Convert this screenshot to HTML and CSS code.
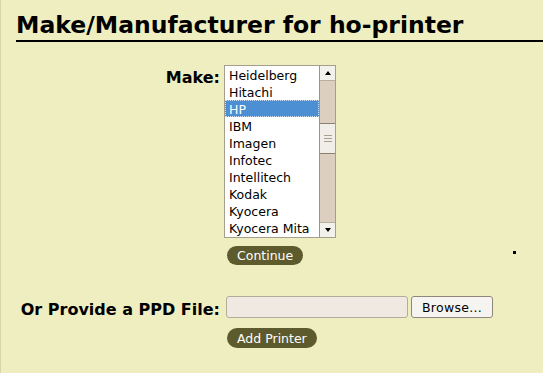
FILE: index.html
```html
<!DOCTYPE html>
<html>
<head>
<meta charset="utf-8">
<title>Make/Manufacturer for ho-printer</title>
<link rel="stylesheet" href="styles.css">
</head>
<body>
<h2 class="title">Make/Manufacturer for ho-printer</h2>
<form class="form">
  <div class="row row-make">
    <div class="label label-make">Make:</div>
    <div class="listbox">
      <div class="options">
        <div class="opt">Heidelberg</div>
        <div class="opt">Hitachi</div>
        <div class="opt sel">HP</div>
        <div class="opt">IBM</div>
        <div class="opt">Imagen</div>
        <div class="opt">Infotec</div>
        <div class="opt">Intellitech</div>
        <div class="opt">Kodak</div>
        <div class="opt">Kyocera</div>
        <div class="opt">Kyocera Mita</div>
      </div>
      <div class="sbar">
        <div class="sbtn"><span class="arr-up"></span></div>
        <div class="track">
          <div class="track-top"></div>
          <div class="thumb"><span class="grip"></span><span class="grip"></span><span class="grip"></span></div>
          <div class="track-bot"></div>
        </div>
        <div class="sbtn"><span class="arr-down"></span></div>
      </div>
    </div>
  </div>
  <div class="row row-continue">
    <div></div>
    <div class="ctrl-line">
      <button type="button" class="pill">Continue</button>
      <span class="dot"></span>
    </div>
  </div>
  <div class="row row-file">
    <div class="label label-file">Or Provide a PPD File:</div>
    <div class="file">
      <input class="file-field" type="text" readonly>
      <button type="button" class="browse">Browse...</button>
    </div>
  </div>
  <div class="row row-add">
    <div></div>
    <div class="ctrl-line">
      <button type="button" class="pill">Add Printer</button>
    </div>
  </div>
</form>
</body>
</html>
```
FILE: styles.css
```css
html { background: #efeec0; }
body {
  margin: 0;
  padding: 0;
  min-height: 373px;
  box-sizing: border-box;
  background: #efeec0;
  border-left: 1px solid #d8d6a8;
  font-family: "DejaVu Sans", sans-serif;
  color: #000;
}
.title {
  margin: 12px 0 0 15px;
  font-size: 23.5px;
  font-weight: bold;
  line-height: 27px;
  padding-bottom: 1px;
  border-bottom: 2px solid #000;
}
.form { margin: 0; }
.row {
  display: grid;
  grid-template-columns: 223px 1fr;
}
.row-make { margin-top: 23px; }
.row-continue { margin-top: 8px; }
.row-file { margin-top: 31px; }
.row-add { margin-top: 9px; }
.label {
  text-align: right;
  padding-right: 4px;
  font-size: 16px;
  font-weight: bold;
  line-height: 19px;
}
.label-make { padding-top: 3px; }
.label-file { padding-top: 4px; }

.listbox {
  display: flex;
  width: 112px;
  height: 173px;
  box-sizing: border-box;
  border: 1px solid #a39f8c;
  background: #fff;
}
.options { flex: 1; }
.opt {
  height: 17px;
  line-height: 20px;
  padding-left: 4px;
  font-size: 12.5px;
  white-space: nowrap;
  box-sizing: border-box;
}
.opt.sel {
  background: #4c8fd3;
  color: #fff;
  outline: 1px dotted #cfe0f2;
  outline-offset: -1px;
}
.sbar {
  width: 15px;
  border-left: 1px solid #9c9585;
  display: flex;
  flex-direction: column;
  background: #dccfc0;
}
.sbtn {
  height: 14px;
  background: #f3f1ec;
  border-bottom: 1px solid #b8ae9f;
  display: flex;
  align-items: center;
  justify-content: center;
}
.sbtn:last-child {
  border-bottom: none;
  border-top: 1px solid #b8ae9f;
}
.arr-up, .arr-down {
  width: 0;
  height: 0;
  border-left: 3px solid transparent;
  border-right: 3px solid transparent;
}
.arr-up { border-bottom: 4px solid #000; }
.arr-down { border-top: 4px solid #000; }
.track {
  flex: 1;
  display: flex;
  flex-direction: column;
}
.track-top { height: 42px; }
.thumb {
  height: 29px;
  background: #f1eee9;
  border-top: 1px solid #8a8070;
  border-bottom: 1px solid #8a8070;
  display: flex;
  flex-direction: column;
  align-items: center;
  justify-content: center;
  gap: 2px;
}
.grip {
  width: 8px;
  height: 1px;
  background: #a8a090;
}
.track-bot { flex: 1; }

.ctrl-line {
  display: flex;
  align-items: flex-start;
}
.pill {
  margin: 0 0 0 3px;
  height: 19px;
  padding: 0 10px;
  border: none;
  border-radius: 10px;
  background: #5d5b2d;
  color: #fff;
  font-family: "DejaVu Sans", sans-serif;
  font-size: 12.5px;
  line-height: 19px;
}
.row-add .pill { height: 20px; }
.dot {
  width: 3px;
  height: 3px;
  background: #000;
  margin: 5px 27px 0 auto;
}
.file {
  display: flex;
  align-items: flex-start;
}
.file-field {
  margin: 0 0 0 2px;
  width: 182px;
  height: 22px;
  box-sizing: border-box;
  padding: 0;
  border: 1px solid #b3ab9c;
  border-radius: 3px;
  background: #efe9e1;
}
.browse {
  margin: 0 0 0 3px;
  width: 82px;
  height: 22px;
  box-sizing: border-box;
  padding: 0;
  border: 1px solid #8f8779;
  border-radius: 3px;
  background: #f6f4f0;
  color: #000;
  font-family: "DejaVu Sans", sans-serif;
  font-size: 12.5px;
  letter-spacing: 0.3px;
}
```
